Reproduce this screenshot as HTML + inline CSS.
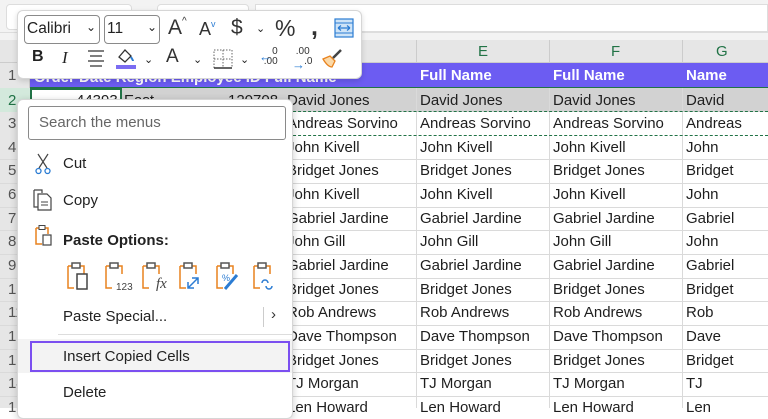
<!DOCTYPE html>
<html><head><meta charset="utf-8"><style>
*{margin:0;padding:0;box-sizing:border-box}
body{width:768px;height:408px;overflow:hidden;background:#fff;font-family:"Liberation Sans",sans-serif;position:relative;color:#222}
.a{position:absolute}
.cell{position:absolute;font-size:15px;white-space:nowrap;color:#1e1e1e;line-height:23px}
.vl{position:absolute;width:1px;background:#dadada}
.hl{position:absolute;height:1px;background:#dadada;left:0;width:768px}
.rn{position:absolute;left:8px;font-size:15px;color:#555;line-height:23px}
.mi{position:absolute;left:63px;font-size:15px;color:#222}
.tb{position:absolute;font-size:21px;color:#333}
</style></head><body>
<div class="a" style="left:0;top:0;width:768px;height:33px;background:#f3f3f3;border-bottom:1px solid #ddd"></div>
<div class="a" style="left:6px;top:4px;width:126px;height:26px;background:#fff;border:1px solid #ddd;border-radius:4px"></div>
<div class="a" style="left:157px;top:4px;width:92px;height:26px;background:#fff;border:1px solid #ddd;border-radius:4px"></div>
<div class="a" style="left:255px;top:4px;width:513px;height:28px;background:#fff;border:1px solid #ddd"></div>
<div class="a" style="left:0;top:33px;width:768px;height:8px;background:#f3f3f3"></div>
<div class="a" style="left:0;top:40px;width:768px;height:23px;background:#e6e6e6;border-bottom:1px solid #ccc"></div>
<div class="a" style="left:416px;top:40px;width:1px;height:23px;background:#ccc"></div>
<div class="a" style="left:549px;top:40px;width:1px;height:23px;background:#ccc"></div>
<div class="a" style="left:682px;top:40px;width:1px;height:23px;background:#ccc"></div>
<div class="a" style="left:478px;top:43px;font-size:15px;color:#217346">E</div>
<div class="a" style="left:611px;top:43px;font-size:15px;color:#217346">F</div>
<div class="a" style="left:716px;top:43px;font-size:15px;color:#217346">G</div>
<div class="a" style="left:0;top:63px;width:30px;height:345px;background:#e6e6e6;border-right:1px solid #ccc"></div>
<div class="a" style="left:0;top:88px;width:30px;height:24px;background:#d3e9dc"></div>
<div class="a" style="left:30px;top:63px;width:738px;height:25px;background:#6c5cf2;border-bottom:1px solid #217346"></div>
<div class="cell" style="left:34px;top:66px;color:#fff;font-weight:bold">Order Date Region Employee ID Full Name</div>
<div class="cell" style="left:420px;top:64px;color:#fff;font-weight:bold">Full Name</div>
<div class="cell" style="left:553px;top:64px;color:#fff;font-weight:bold">Full Name</div>
<div class="cell" style="left:686px;top:64px;color:#fff;font-weight:bold">Name</div>
<div class="a" style="left:30px;top:88px;width:738px;height:24px;background:#d2d2d2"></div>
<div class="a" style="left:30px;top:88px;width:92px;height:24px;background:#fff;border:2px solid #217346"></div>
<div class="cell" style="left:76px;top:89px">44393</div><div class="cell" style="left:124px;top:89px">East</div><div class="cell" style="left:228px;top:89px">120708</div>
<div class="vl" style="left:416px;top:88px;height:320px"></div>
<div class="vl" style="left:549px;top:88px;height:320px"></div>
<div class="vl" style="left:682px;top:88px;height:320px"></div>
<div class="hl" style="top:159px"></div><div class="hl" style="top:183px"></div><div class="hl" style="top:207px"></div><div class="hl" style="top:230px"></div><div class="hl" style="top:254px"></div><div class="hl" style="top:278px"></div><div class="hl" style="top:301px"></div><div class="hl" style="top:325px"></div><div class="hl" style="top:349px"></div><div class="hl" style="top:372px"></div><div class="hl" style="top:396px"></div>
<div class="a" style="left:283px;top:111px;width:485px;height:0;border-top:1px dashed #217346"></div>
<div class="a" style="left:283px;top:135px;width:485px;height:0;border-top:1px dashed #217346"></div>
<div class="rn" style="top:64px">1</div><div class="rn" style="top:89px;color:#217346">2</div><div class="rn" style="top:112px">3</div><div class="rn" style="top:136px">4</div><div class="rn" style="top:159px">5</div><div class="rn" style="top:183px">6</div><div class="rn" style="top:207px">7</div><div class="rn" style="top:230px">8</div><div class="rn" style="top:254px">9</div><div class="rn" style="top:278px">10</div><div class="rn" style="top:301px">11</div><div class="rn" style="top:325px">12</div><div class="rn" style="top:349px">13</div><div class="rn" style="top:372px">14</div><div class="rn" style="top:396px">15</div>
<div class="cell" style="left:287px;top:89px">David Jones</div><div class="cell" style="left:420px;top:89px">David Jones</div><div class="cell" style="left:553px;top:89px">David Jones</div><div class="cell" style="left:686px;top:89px">David</div>
<div class="cell" style="left:287px;top:112px">Andreas Sorvino</div><div class="cell" style="left:420px;top:112px">Andreas Sorvino</div><div class="cell" style="left:553px;top:112px">Andreas Sorvino</div><div class="cell" style="left:686px;top:112px">Andreas</div>
<div class="cell" style="left:287px;top:136px">John Kivell</div><div class="cell" style="left:420px;top:136px">John Kivell</div><div class="cell" style="left:553px;top:136px">John Kivell</div><div class="cell" style="left:686px;top:136px">John</div>
<div class="cell" style="left:287px;top:159px">Bridget Jones</div><div class="cell" style="left:420px;top:159px">Bridget Jones</div><div class="cell" style="left:553px;top:159px">Bridget Jones</div><div class="cell" style="left:686px;top:159px">Bridget</div>
<div class="cell" style="left:287px;top:183px">John Kivell</div><div class="cell" style="left:420px;top:183px">John Kivell</div><div class="cell" style="left:553px;top:183px">John Kivell</div><div class="cell" style="left:686px;top:183px">John</div>
<div class="cell" style="left:287px;top:207px">Gabriel Jardine</div><div class="cell" style="left:420px;top:207px">Gabriel Jardine</div><div class="cell" style="left:553px;top:207px">Gabriel Jardine</div><div class="cell" style="left:686px;top:207px">Gabriel</div>
<div class="cell" style="left:287px;top:230px">John Gill</div><div class="cell" style="left:420px;top:230px">John Gill</div><div class="cell" style="left:553px;top:230px">John Gill</div><div class="cell" style="left:686px;top:230px">John</div>
<div class="cell" style="left:287px;top:254px">Gabriel Jardine</div><div class="cell" style="left:420px;top:254px">Gabriel Jardine</div><div class="cell" style="left:553px;top:254px">Gabriel Jardine</div><div class="cell" style="left:686px;top:254px">Gabriel</div>
<div class="cell" style="left:287px;top:278px">Bridget Jones</div><div class="cell" style="left:420px;top:278px">Bridget Jones</div><div class="cell" style="left:553px;top:278px">Bridget Jones</div><div class="cell" style="left:686px;top:278px">Bridget</div>
<div class="cell" style="left:287px;top:301px">Rob Andrews</div><div class="cell" style="left:420px;top:301px">Rob Andrews</div><div class="cell" style="left:553px;top:301px">Rob Andrews</div><div class="cell" style="left:686px;top:301px">Rob</div>
<div class="cell" style="left:287px;top:325px">Dave Thompson</div><div class="cell" style="left:420px;top:325px">Dave Thompson</div><div class="cell" style="left:553px;top:325px">Dave Thompson</div><div class="cell" style="left:686px;top:325px">Dave</div>
<div class="cell" style="left:287px;top:349px">Bridget Jones</div><div class="cell" style="left:420px;top:349px">Bridget Jones</div><div class="cell" style="left:553px;top:349px">Bridget Jones</div><div class="cell" style="left:686px;top:349px">Bridget</div>
<div class="cell" style="left:287px;top:372px">TJ Morgan</div><div class="cell" style="left:420px;top:372px">TJ Morgan</div><div class="cell" style="left:553px;top:372px">TJ Morgan</div><div class="cell" style="left:686px;top:372px">TJ</div>
<div class="cell" style="left:287px;top:396px">Len Howard</div><div class="cell" style="left:420px;top:396px">Len Howard</div><div class="cell" style="left:553px;top:396px">Len Howard</div><div class="cell" style="left:686px;top:396px">Len</div>

<div class="a" style="left:17px;top:99px;width:276px;height:320px;background:#fff;border:1px solid #d6d6d6;border-radius:6px;box-shadow:0 2px 8px rgba(0,0,0,.2)"></div>
<div class="a" style="left:28px;top:106px;width:258px;height:34px;border:1px solid #8a8a8a;border-radius:3px;background:#fff"></div>
<div class="a" style="left:39px;top:114px;font-size:15px;color:#666">Search the menus</div>
<svg class="a" style="left:34px;top:152px" width="18" height="24" viewBox="0 0 18 24"><path d="M4 2L13 16M14 2L5 16" stroke="#444" stroke-width="1.2" fill="none"/><circle cx="4.5" cy="19" r="2.5" stroke="#2b7cd3" stroke-width="1.3" fill="none"/><circle cx="13.5" cy="19" r="2.5" stroke="#2b7cd3" stroke-width="1.3" fill="none"/></svg>
<div class="mi" style="top:155px">Cut</div>
<svg class="a" style="left:32px;top:188px" width="22" height="24" viewBox="0 0 22 24"><path d="M2 2h8v3M2 2v17h4" stroke="#444" stroke-width="1.2" fill="none"/><path d="M6 6h9l4 4v12H6z" stroke="#444" stroke-width="1.2" fill="#fff"/><path d="M9 14h7M9 17h7" stroke="#444" stroke-width="1"/></svg>
<div class="mi" style="top:192px">Copy</div>
<svg class="a" style="left:34px;top:224px" width="20" height="24" viewBox="0 0 20 24"><path d="M2 4h12v6M2 4v16h6" stroke="#e8821e" stroke-width="1.5" fill="none"/><rect x="5" y="1.5" width="6" height="4" stroke="#444" fill="#fff"/><rect x="9" y="11" width="8" height="10" stroke="#444" stroke-width="1.2" fill="#fff"/></svg>
<div class="mi" style="top:232px;font-weight:bold">Paste Options:</div>
<svg class="a" style="left:64px;top:262px" width="220" height="30" viewBox="0 0 220 30">
<g stroke-width="1.5" fill="none"><g transform="translate(2,0)"><path d="M2 4h16v8M2 4v22h6" stroke="#e8821e"/><rect x="6" y="1" width="8" height="5" stroke="#555" fill="#fff"/><rect x="11" y="12" width="10" height="15" stroke="#444" fill="#fff"/></g>
<g transform="translate(40,0)"><path d="M2 4h16v8M2 4v22h6" stroke="#e8821e"/><rect x="6" y="1" width="8" height="5" stroke="#555" fill="#fff"/></g>
<g transform="translate(77,0)"><path d="M2 4h16v8M2 4v22h6" stroke="#e8821e"/><rect x="6" y="1" width="8" height="5" stroke="#555" fill="#fff"/></g>
<g transform="translate(114,0)"><path d="M2 4h16v8M2 4v22h6" stroke="#e8821e"/><rect x="6" y="1" width="8" height="5" stroke="#555" fill="#fff"/><path d="M10 26l10-10M14 16h6v6M10 20v6h6" stroke="#2b7cd3"/></g>
<g transform="translate(151,0)"><path d="M2 4h16v8M2 4v22h6" stroke="#e8821e"/><rect x="6" y="1" width="8" height="5" stroke="#555" fill="#fff"/><path d="M10 27l12-14" stroke="#2b7cd3" stroke-width="3"/></g>
<g transform="translate(188,0)"><path d="M2 4h16v8M2 4v22h6" stroke="#e8821e"/><rect x="6" y="1" width="8" height="5" stroke="#555" fill="#fff"/><path d="M10 21a3 3 0 0 1 6 0M14 24a3 3 0 0 0 6 0" stroke="#2b7cd3"/></g></g>
<text x="52" y="28" font-size="10" fill="#444" font-family="Liberation Sans">123</text>
<text x="92" y="26" font-size="15" fill="#444" font-style="italic" font-family="Liberation Serif">fx</text>
<text x="158" y="19" font-size="9" fill="#2b7cd3" font-family="Liberation Sans">%</text>
</svg>
<div class="mi" style="top:308px">Paste Special...</div>
<div class="a" style="left:263px;top:307px;width:1px;height:20px;background:#ccc"></div>
<div class="a" style="left:271px;top:306px;font-size:15px;color:#333">›</div>
<div class="a" style="left:58px;top:334px;width:234px;height:1px;background:#ddd"></div>
<div class="a" style="left:18px;top:339px;width:274px;height:34px;background:#f3f3f3"></div>
<div class="a" style="left:30px;top:341px;width:260px;height:31px;border:2px solid #7b4ff0"></div>
<div class="mi" style="top:348px">Insert Copied Cells</div>
<div class="mi" style="top:384px">Delete</div>

<div class="a" style="left:17px;top:10px;width:345px;height:69px;background:#fff;border:1px solid #d6d6d6;border-radius:6px;box-shadow:0 2px 6px rgba(0,0,0,.15)"></div>
<div class="a" style="left:24px;top:15px;width:76px;height:29px;border:1px solid #8a8a8a;border-radius:4px"></div>
<div class="a" style="left:27px;top:20px;font-size:15.5px">Calibri</div>
<div class="a" style="left:86px;top:20px;font-size:12px">⌄</div>
<div class="a" style="left:104px;top:15px;width:56px;height:29px;border:1px solid #8a8a8a;border-radius:4px"></div>
<div class="a" style="left:107px;top:20px;font-size:15.5px">11</div>
<div class="a" style="left:147px;top:20px;font-size:12px">⌄</div>
<div class="tb" style="left:168px;top:16px">A<span style="font-size:10px;vertical-align:top;color:#333">^</span></div>
<div class="tb" style="left:199px;top:19px;font-size:18px">A<span style="font-size:9px;vertical-align:top;color:#2b7cd3">v</span></div>
<div class="tb" style="left:231px;top:16px">$</div>
<div class="a" style="left:256px;top:22px;font-size:11px">⌄</div>
<div class="tb" style="left:275px;top:15px;font-size:23px">%</div>
<div class="tb" style="left:311px;top:13px;font-weight:bold;font-size:25px">,</div>
<svg class="a" style="left:334px;top:18px" width="20" height="20" viewBox="0 0 20 20"><rect x="1" y="1" width="18" height="18" fill="#cfe4f7" stroke="#2b7cd3" stroke-width="1.2"/><path d="M4 10h12M4 10l3-2.5M4 10l3 2.5M16 10l-3-2.5M16 10l-3 2.5" stroke="#2b7cd3" fill="none" stroke-width="1.2"/><path d="M1 5h18M1 15h18" stroke="#2b7cd3"/></svg>
<div class="a" style="left:32px;top:48px;font-size:16px;font-weight:bold">B</div>
<div class="a" style="left:62px;top:48px;font-size:17px;font-style:italic;font-family:'Liberation Serif',serif">I</div>
<svg class="a" style="left:87px;top:49px" width="18" height="18" viewBox="0 0 18 18"><path d="M1 2h16M3 7h12M1 12h16M3 17h12" stroke="#333" stroke-width="1.2"/></svg>
<svg class="a" style="left:115px;top:46px" width="22" height="24" viewBox="0 0 22 24"><path d="M4 11l6-7 6 6-6 6z" stroke="#333" fill="none" stroke-width="1.3"/><path d="M16 11c1 2 2 3 2 4" stroke="#2b7cd3" stroke-width="2"/><rect x="1" y="19" width="20" height="4" fill="#7b6cf2"/></svg>
<div class="a" style="left:144px;top:53px;font-size:11px">⌄</div>
<div class="tb" style="left:166px;top:46px;font-size:19px">A</div>
<div class="a" style="left:193px;top:53px;font-size:11px">⌄</div>
<svg class="a" style="left:213px;top:49px" width="20" height="20" viewBox="0 0 20 20"><path d="M1 1h18v18H1zM10 1v18M1 10h18" stroke="#666" stroke-dasharray="1.5 1.5" fill="none"/><path d="M1 19h18" stroke="#333" stroke-width="1.5"/></svg>
<div class="a" style="left:240px;top:53px;font-size:11px">⌄</div>
<div class="a" style="left:261px;top:47px;font-size:10px;line-height:10px;color:#333">&nbsp;&nbsp;&nbsp;&nbsp;0<br>&nbsp;.00</div>
<div class="a" style="left:259px;top:49px;font-size:13px;color:#2b7cd3">←</div>
<div class="a" style="left:293px;top:47px;font-size:10px;line-height:10px;color:#333">&nbsp;.00<br>&nbsp;&nbsp;&nbsp;&nbsp;.0</div>
<div class="a" style="left:292px;top:57px;font-size:13px;color:#2b7cd3">→</div>
<svg class="a" style="left:320px;top:48px" width="24" height="20" viewBox="0 0 24 20"><path d="M3 11l7-3 5 5-3 6c-3 0-6-3-9-8z" fill="#fbd9a8" stroke="#e8821e" stroke-width="1.3"/><path d="M13 10l8-8" stroke="#444" stroke-width="2.5"/></svg>
</body></html>
